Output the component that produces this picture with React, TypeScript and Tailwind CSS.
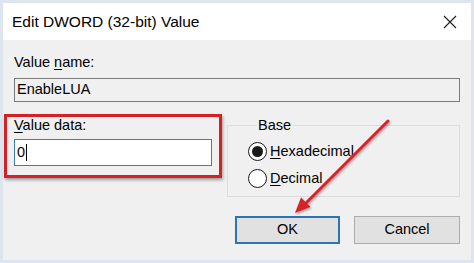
import React from "react";

const font = { fontFamily: '"Liberation Sans", Arial, sans-serif' };

function Radio({ checked, label, access }: { checked: boolean; label: string; access: string }) {
  const rest = label.slice(1);
  return (
    <div className="flex items-center h-[20px]">
      <div className="w-[19px] h-[19px] rounded-full border-[1.5px] border-[#1a1a1a] bg-white flex items-center justify-center">
        {checked && <div className="w-[11px] h-[11px] rounded-full bg-[#1a1a1a]" />}
      </div>
      <span className="ml-[3px] text-[14.5px] leading-[20px] text-black">
        <span className="underline underline-offset-2">{access}</span>
        {rest}
      </span>
    </div>
  );
}

export default function App() {
  return (
    <div className="relative w-[474px] h-[263px] bg-[#dde6ee] pt-[3px] pl-[3px] overflow-hidden" style={font}>
      <div className="w-[468px] h-[257px] bg-[#f0f0f0] flex flex-col">
        {/* title bar */}
        <div className="h-[37px] bg-white flex items-center justify-between pl-[9px] pr-[14px]">
          <span className="text-[15.5px] text-black leading-[20px]">Edit DWORD (32-bit) Value</span>
          <svg width="14" height="14" viewBox="0 0 14 14">
            <path d="M1 1 L13 13 M13 1 L1 13" stroke="#222" strokeWidth="1.2" fill="none" />
          </svg>
        </div>
        {/* body */}
        <div className="flex flex-col pl-[11px] pr-[11px] pt-[12px]">
          <div className="text-[14.5px] leading-[20px] text-black">
            Value <span className="underline underline-offset-2">n</span>ame:
          </div>
          <div className="mt-[6px] h-[24px] border border-[#7a7a7a] bg-[#f0f0f0] flex items-center pl-[2px] text-[14.5px] text-black">
            EnableLUA
          </div>
          <div className="mt-[13px] flex items-start">
            <div className="relative w-[199px] flex flex-col">
              <div className="text-[14.5px] leading-[20px] text-black">
                <span className="underline underline-offset-2">V</span>alue data:
              </div>
              <div className="mt-[4px] h-[27px] border border-[#3d7fb0] bg-white flex items-center pl-[2px] text-[14.5px] text-black">
                0<span className="inline-block w-[1px] h-[17px] bg-black ml-[1px]" />
              </div>
              <div className="absolute -left-[10px] -top-[1px] -right-[10px] -bottom-[12px] border-[3px] border-[#d42027] shadow-[1px_2px_3px_rgba(0,0,0,0.35)] pointer-events-none" />
            </div>
            <fieldset className="ml-[15px] w-[234px] h-[82px] border border-[#dcdcdc] pl-[20px]">
              <legend className="ml-[8px] px-[2px] text-[14.5px] leading-[20px] text-black">Base</legend>
              <div className="mt-[6px]">
                <Radio checked access="H" label="Hexadecimal" />
              </div>
              <div className="mt-[7px]">
                <Radio checked={false} access="D" label="Decimal" />
              </div>
            </fieldset>
          </div>
          <div className="mt-[19px] flex justify-end gap-[14px]">
            <div className="w-[105px] h-[28px] border-2 border-[#2c74b4] bg-[#e1e1e1] flex items-center justify-center text-[14.5px] text-black">
              OK
            </div>
            <div className="w-[106px] h-[28px] border border-[#adadad] bg-[#e1e1e1] flex items-center justify-center text-[14.5px] text-black">
              Cancel
            </div>
          </div>
        </div>
      </div>
      {/* annotation arrow */}
      <svg className="absolute left-0 top-0 pointer-events-none" width="474" height="263" viewBox="0 0 474 263">
        <defs>
          <filter id="sh" x="-20%" y="-20%" width="140%" height="140%">
            <feDropShadow dx="1" dy="1.5" stdDeviation="1" floodColor="#000" floodOpacity="0.35" />
          </filter>
        </defs>
        <g filter="url(#sh)">
          <path d="M388 121 L304 205" stroke="#d8232a" strokeWidth="3" strokeLinecap="round" fill="none" />
          <polygon points="295,213 310.5,207 301,197.5" fill="#d8232a" />
        </g>
      </svg>
    </div>
  );
}
